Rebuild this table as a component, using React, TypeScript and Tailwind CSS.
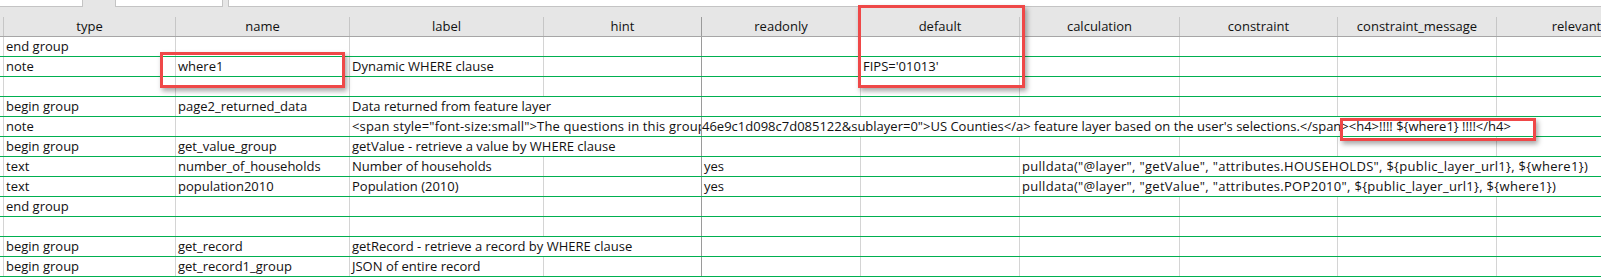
import React from 'react'

type Cell = { t?: string; span?: number; clip?: boolean; flush?: boolean; wide?: string }

const headers = ['type', 'name', 'label', 'hint', 'readonly', 'default', 'calculation', 'constraint', 'constraint_message', 'relevant']

const spanClass: Record<number, string> = {
  1: '',
  2: 'col-span-2',
  3: 'col-span-3',
  4: 'col-span-4',
  6: 'col-span-6',
}

const pull = (attr: string) => `pulldata("@layer", "getValue", "attributes.${attr}", \${public_layer_url1}, \${where1})`

const rows: Cell[][] = [
  [{ t: 'end group' }, {}, {}, {}, {}, {}, {}, {}, {}, {}],
  [{ t: 'note' }, { t: 'where1' }, { t: 'Dynamic WHERE clause' }, {}, {}, { t: "FIPS='01013'" }, {}, {}, {}, {}],
  [{}, {}, {}, {}, {}, {}, {}, {}, {}, {}],
  [{ t: 'begin group' }, { t: 'page2_returned_data' }, { t: 'Data returned from feature layer', span: 2 }, {}, {}, {}, {}, {}, {}],
  [
    { t: 'note' },
    {},
    {
      t: '<span style="font-size:small">The questions in this group retrieve data from the',
      span: 2,
      clip: true,
      wide: 'tracking-[0.15px]',
    },
    {
      t: '46e9c1d098c7d085122&sublayer=0">US Counties</a> feature layer based on the user\'s selections.</span><h4>!!!! ${where1} !!!!</h4>',
      span: 6,
      clip: true,
      flush: true,
    },
  ],
  [{ t: 'begin group' }, { t: 'get_value_group' }, { t: 'getValue - retrieve a value by WHERE clause', span: 2 }, {}, {}, {}, {}, {}, {}],
  [
    { t: 'text' },
    { t: 'number_of_households' },
    { t: 'Number of households' },
    {},
    { t: 'yes' },
    {},
    { t: pull('HOUSEHOLDS'), span: 4, wide: 'tracking-[0.3px]' },
  ],
  [
    { t: 'text' },
    { t: 'population2010' },
    { t: 'Population (2010)' },
    {},
    { t: 'yes' },
    {},
    { t: pull('POP2010'), span: 4, wide: 'tracking-[0.3px]' },
  ],
  [{ t: 'end group' }, {}, {}, {}, {}, {}, {}, {}, {}, {}],
  [{}, {}, {}, {}, {}, {}, {}, {}, {}, {}],
  [{ t: 'begin group' }, { t: 'get_record' }, { t: 'getRecord - retrieve a record by WHERE clause', span: 2 }, {}, {}, {}, {}, {}, {}],
  [{ t: 'begin group' }, { t: 'get_record1_group' }, { t: 'JSON of entire record' }, {}, {}, {}, {}, {}, {}, {}],
]

const gridCols = 'grid grid-cols-[3px_172px_174px_194px_158px_159px_159px_160px_158px_159px_160px]'

function BodyRow({ cells }: { cells: Cell[] }) {
  let col = 0
  return (
    <div className={`${gridCols} h-[20px] border-b border-[#00b050]`}>
      <div />
      {cells.map((c, i) => {
        const start = col
        col += c.span || 1
        // freeze pane line sits between hint and readonly
        const border = start === 4 ? 'border-[#9a9a9a]' : 'border-[#d4d4d4]'
        return (
          <div
            key={i}
            className={`${spanClass[c.span || 1]} border-l ${border} h-[19px] whitespace-nowrap text-[13px] leading-[19px] text-[#111] ${c.flush ? 'pl-0' : 'pl-[2px]'} ${c.clip ? 'overflow-hidden' : 'overflow-visible'} ${c.wide || ''}`}
          >
            {c.t}
          </div>
        )
      })}
    </div>
  )
}

function RedBox({ className }: { className: string }) {
  return (
    <div
      className={`pointer-events-none absolute border-[3px] border-[#ef4848] shadow-[2px_3px_5px_rgba(0,0,0,0.35)] ${className}`}
    />
  )
}

export default function App() {
  return (
    <div
      className="relative h-[280px] w-[1601px] overflow-hidden bg-white"
      style={{ fontFamily: '"Open Sans", "Liberation Sans", sans-serif' }}
    >
      {/* sheet tabs strip */}
      <div className="flex h-[7px] bg-[#e6e6e6]">
        <div className="w-[83px] border-r border-b border-[#c4c4c4] bg-white" />
        <div className="w-[32px]" />
        <div className="w-[108px] border-x border-b border-[#c4c4c4] bg-white" />
        <div className="w-[5px]" />
        <div className="flex-1 border-l border-b border-[#c4c4c4] bg-white" />
      </div>

      {/* header */}
      <div className="bg-[#e6e6e6]">
        <div className="h-[10px]" />
        <div className={`${gridCols} h-[20px] border-b border-[#a6a6a6]`}>
          <div />
          {headers.map((h, i) => (
            <div
              key={h}
              className={`border-l ${i === 4 ? 'border-[#9a9a9a]' : 'border-[#c6c6c6]'} text-center text-[13px] leading-[19px] text-[#111]`}
            >
              {h}
            </div>
          ))}
        </div>
      </div>

      {/* body */}
      <div>
        {rows.map((r, i) => (
          <BodyRow key={i} cells={r} />
        ))}
      </div>

      <RedBox className="left-[160px] top-[52px] h-[36px] w-[185px]" />
      <RedBox className="left-[858px] top-[5px] h-[83px] w-[167px]" />
      <RedBox className="left-[1340px] top-[118px] h-[23px] w-[196px]" />
    </div>
  )
}
